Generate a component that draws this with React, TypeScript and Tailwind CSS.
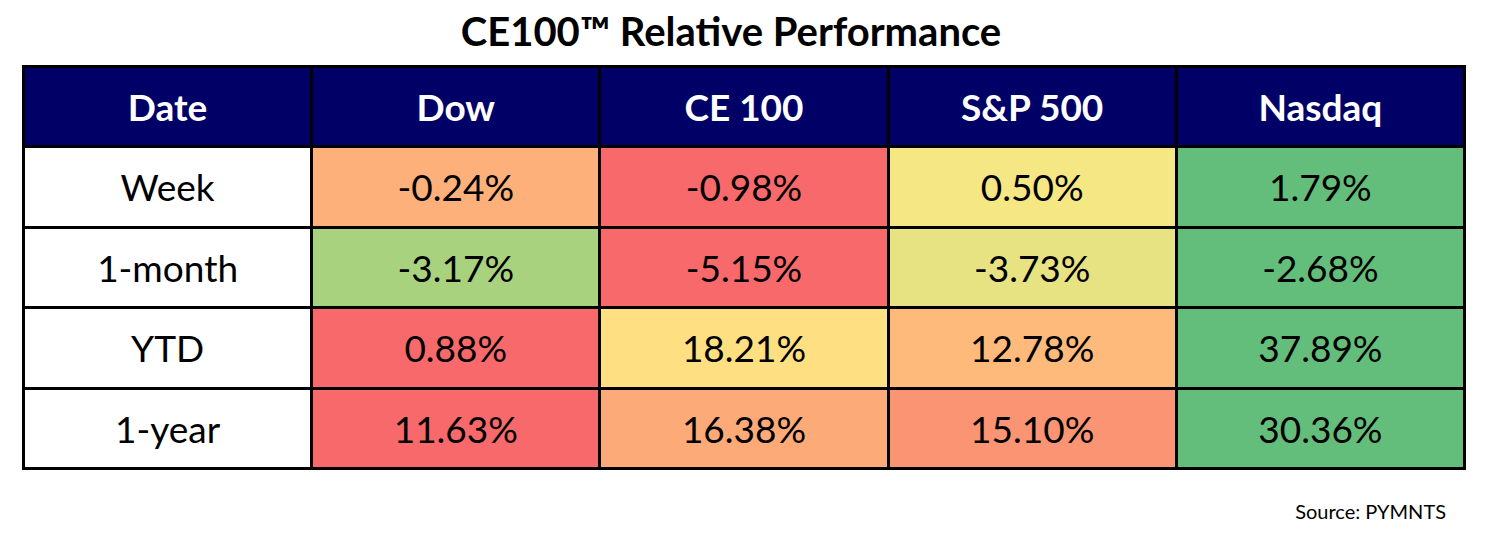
import React from "react";

const headers = ["Date", "Dow", "CE 100", "S&P 500", "Nasdaq"];

const rows: { label: string; cells: { v: string; c: string }[] }[] = [
  {
    label: "Week",
    cells: [
      { v: "-0.24%", c: "bg-[#fdb07a]" },
      { v: "-0.98%", c: "bg-[#f8696b]" },
      { v: "0.50%", c: "bg-[#f5e783]" },
      { v: "1.79%", c: "bg-[#63be7b]" },
    ],
  },
  {
    label: "1-month",
    cells: [
      { v: "-3.17%", c: "bg-[#a9d27f]" },
      { v: "-5.15%", c: "bg-[#f8696b]" },
      { v: "-3.73%", c: "bg-[#e8e382]" },
      { v: "-2.68%", c: "bg-[#63be7b]" },
    ],
  },
  {
    label: "YTD",
    cells: [
      { v: "0.88%", c: "bg-[#f8696b]" },
      { v: "18.21%", c: "bg-[#fedf81]" },
      { v: "12.78%", c: "bg-[#fdba7b]" },
      { v: "37.89%", c: "bg-[#63be7b]" },
    ],
  },
  {
    label: "1-year",
    cells: [
      { v: "11.63%", c: "bg-[#f8696b]" },
      { v: "16.38%", c: "bg-[#fcaa77]" },
      { v: "15.10%", c: "bg-[#fa9473]" },
      { v: "30.36%", c: "bg-[#63be7b]" },
    ],
  },
];

export default function App() {
  return (
    <div
      className="w-[1488px] h-[537px] bg-white text-black"
      style={{ fontFamily: "Lato, 'Open Sans', sans-serif" }}
    >
      <div className="flex justify-center pt-[7px] pr-[26px] h-[65px]">
        <h1 className="text-[40px] leading-[48px] font-bold">CE100™ Relative Performance</h1>
      </div>
      <div className="ml-[22px] w-[1444px] h-[405px] bg-black p-[3px] grid grid-cols-5 grid-rows-5 gap-[3px]">
        {headers.map((h) => (
          <div
            key={h}
            className="bg-[#000066] text-white font-bold text-[37px] flex items-center justify-center"
          >
            {h}
          </div>
        ))}
        {rows.map((r) => (
          <React.Fragment key={r.label}>
            <div className="bg-white text-[37px] flex items-center justify-center">{r.label}</div>
            {r.cells.map((c, i) => (
              <div key={i} className={`${c.c} text-[37px] flex items-center justify-center`}>
                {c.v}
              </div>
            ))}
          </React.Fragment>
        ))}
      </div>
      <div className="flex justify-end pr-[42px] pt-[29px]">
        <span className="text-[20px] leading-[24px]">Source: PYMNTS</span>
      </div>
    </div>
  );
}
